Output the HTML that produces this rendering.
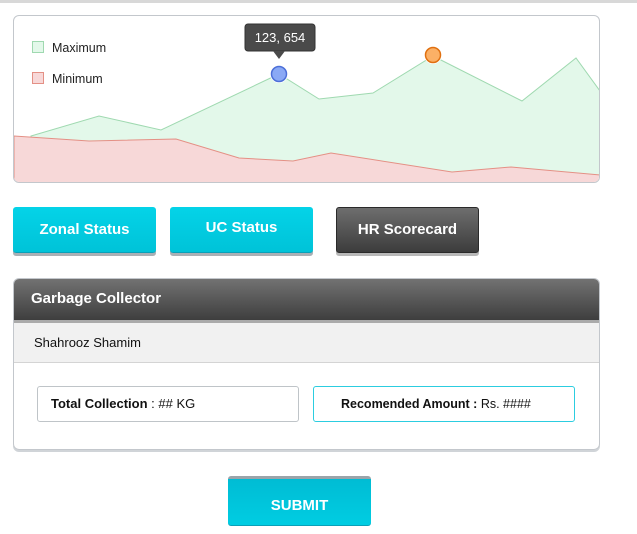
<!DOCTYPE html>
<html><head><style>
body{margin:0;width:637px;height:534px;background:#fff;font-family:"Liberation Sans",sans-serif;position:relative;overflow:hidden}
.top{position:absolute;left:0;top:0;width:637px;height:3px;background:#d8d8d8}
.chart{position:absolute;left:13px;top:15px;width:585px;height:166px;border:1px solid #c3c7cc;border-radius:6px;overflow:hidden;background:#fff}
.btn{position:absolute;height:46px;border-radius:3px;color:#fff;font-weight:bold;font-size:15px;text-align:center;box-sizing:border-box}
.cy{background:linear-gradient(#04d3e8,#00c3d8);border-bottom:1px solid #0aa0b8;box-shadow:0 3px 0 #aab0b5}
.dk{background:linear-gradient(#6e6e6e,#3c3c3c);border:1px solid #2a2a2a;box-shadow:0 3px 0 #b8b8b8}
.panel{position:absolute;left:13px;top:278px;width:585px;height:170px;border:1px solid #c3c7cc;border-radius:6px;overflow:hidden;box-shadow:0 2px 0 #d0d4d8}
.ph{height:41px;background:linear-gradient(#727272,#3e3e3e);color:#fff;font-weight:bold;font-size:15px;line-height:40px;padding-left:17px;border-bottom:3px solid #aaa}
.nm{height:39px;background:#f1f1f1;border-bottom:1px solid #d4d4d4;font-size:13px;line-height:40px;padding-left:20px;color:#111}
.in{position:absolute;top:107px;height:36px;width:262px;box-sizing:border-box;border-radius:3px;font-size:13px;line-height:34px;color:#111}
</style></head><body>
<div class="top"></div>
<div class="chart">
<svg width="586" height="167" viewBox="13 15 586 167" style="position:absolute;left:0;top:0">
<polygon points="30,135 98,115 160,129 278,73 318,98 372,92 432,55 521,100 575,57 599,90 599,182 30,182" fill="#e3f8ea" stroke="#9fd9b0" stroke-width="1"/>
<polygon points="13,135 88,140 175,138 238,157 292,160 330,152 451,171 510,166 599,174 599,182 13,182" fill="#f7d8d8" stroke="#e49085" stroke-width="1"/>
<circle cx="278" cy="73" r="9" fill="#fff"/><circle cx="278" cy="73" r="7.5" fill="#8aa9f5" stroke="#4c6fd8" stroke-width="1.5"/>
<circle cx="432" cy="54" r="9" fill="#fff"/><circle cx="432" cy="54" r="7.5" fill="#fbb066" stroke="#e07010" stroke-width="1.5"/>
<rect x="31.5" y="40.5" width="11" height="11" fill="#e3f8ea" stroke="#9fd9b0"/>
<rect x="31.5" y="71.5" width="11" height="11" fill="#f7d8d8" stroke="#e49085"/>
<text x="51" y="51" font-size="12.5" fill="#222" font-family="Liberation Sans">Maximum</text>
<text x="51" y="82" font-size="12.5" fill="#222" font-family="Liberation Sans">Minimum</text>
<rect x="244" y="23" width="70" height="27" rx="3" fill="#4a4a4a" stroke="#333"/>
<polygon points="272,50 284,50 278,58" fill="#4a4a4a"/>
<text x="279" y="41" font-size="13" fill="#fff" text-anchor="middle" font-family="Liberation Sans">123, 654</text>
</svg>
</div>
<div class="btn cy" style="left:13px;top:207px;width:143px;line-height:46px">Zonal Status</div>
<div class="btn cy" style="left:170px;top:207px;width:143px;line-height:42px">UC Status</div>
<div class="btn dk" style="left:336px;top:207px;width:143px;line-height:44px">HR Scorecard</div>
<div class="panel">
<div class="ph">Garbage Collector</div>
<div class="nm">Shahrooz Shamim</div>
<div class="in" style="left:23px;border:1px solid #bfc4c8;padding-left:13px"><b>Total Collection</b> : ## KG</div>
<div class="in" style="left:299px;border:1px solid #2ccde0;padding-left:27px;font-size:12.5px"><b>Recomended Amount :</b> Rs. ####</div>
</div>
<div class="btn cy" style="left:228px;top:476px;width:143px;height:50px;line-height:54px;border-top:3px solid #9aa4aa;border-radius:3px;box-shadow:none;background:linear-gradient(#00bcd4,#00cde2)">SUBMIT</div>
</body></html>
